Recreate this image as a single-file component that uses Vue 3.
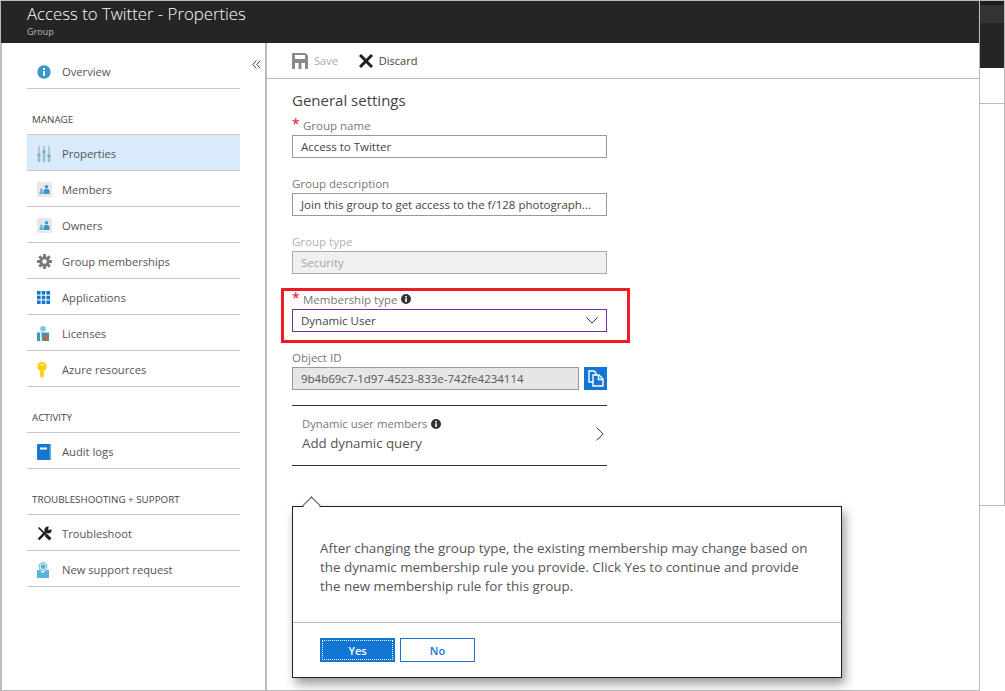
<template>
  <div class="page">
    <div class="blade">
      <header class="blade-head">
        <div class="title">Access to Twitter - Properties</div>
        <div class="subtitle">Group</div>
      </header>
      <div class="blade-body">
        <aside class="sidebar">
          <div class="collapse">
            <svg width="9" height="9" viewBox="0 0 9 9" fill="none" stroke="#444" stroke-width="1">
              <path d="M4.2.6.8 4.5l3.4 3.9M8.2.6 4.8 4.5l3.4 3.9" />
            </svg>
          </div>
          <nav class="nav">
            <div class="nav-group first">
              <a class="nav-item">
                <span class="ico">
                  <svg width="14" height="14" viewBox="0 0 14 14">
                    <circle cx="7" cy="7" r="6.7" fill="#3999c6" />
                    <rect x="6" y="6" width="2" height="5" fill="#fff" />
                    <rect x="6" y="3" width="2" height="2" fill="#fff" />
                  </svg>
                </span>
                Overview
              </a>
            </div>
            <div class="nav-group">
              <div class="nav-label">MANAGE</div>
              <a class="nav-item active">
                <span class="ico">
                  <svg width="14" height="16" viewBox="0 0 14 16">
                    <g fill="#a9d3e6"><rect x="0.5" y="7" width="3" height="9" /><rect x="5.5" y="4" width="3" height="12" /><rect x="10.5" y="8" width="3" height="8" /></g>
                    <g fill="#8fa3ae"><rect x="1.5" y="0" width="1" height="16" /><rect x="6.5" y="0" width="1" height="16" /><rect x="11.5" y="0" width="1" height="16" /><rect x="0.5" y="8" width="3" height="2" /><rect x="5.5" y="5" width="3" height="2" /><rect x="10.5" y="9" width="3" height="2" /></g>
                  </svg>
                </span>
                Properties
              </a>
              <a class="nav-item" v-for="label in ['Members', 'Owners']" :key="label">
                <span class="ico">
                  <svg width="15" height="15" viewBox="0 0 15 15">
                    <rect width="15" height="15" fill="#e8e8e8" />
                    <circle cx="9.5" cy="4.8" r="1.8" fill="#3999c6" />
                    <path d="M6.5 12V8.2L8 7h3l1.5 1.2V12z" fill="#3999c6" />
                    <circle cx="4.3" cy="7.8" r="1.2" fill="#59b4d9" />
                    <path d="M2.5 12V10l1-1h1.6l1 1v2z" fill="#59b4d9" />
                  </svg>
                </span>
                {{ label }}
              </a>
              <a class="nav-item">
                <span class="ico">
                  <svg width="15" height="15" viewBox="0 0 15 15">
                    <g stroke="#7a7a7a" stroke-width="2.8"><path d="M7.5 0v15M0 7.5h15M2.2 2.2l10.6 10.6M12.8 2.2 2.2 12.8" /></g>
                    <circle cx="7.5" cy="7.5" r="5.2" fill="#7a7a7a" />
                    <circle cx="7.5" cy="7.5" r="2.2" fill="#fff" />
                  </svg>
                </span>
                Group memberships
              </a>
              <a class="nav-item">
                <span class="ico">
                  <svg width="13" height="13" viewBox="0 0 13 13" fill="#1376d3">
                    <rect width="3.6" height="3.6" /><rect x="4.7" width="3.6" height="3.6" /><rect x="9.4" width="3.6" height="3.6" />
                    <rect y="4.7" width="3.6" height="3.6" /><rect x="4.7" y="4.7" width="3.6" height="3.6" /><rect x="9.4" y="4.7" width="3.6" height="3.6" />
                    <rect y="9.4" width="3.6" height="3.6" /><rect x="4.7" y="9.4" width="3.6" height="3.6" /><rect x="9.4" y="9.4" width="3.6" height="3.6" />
                  </svg>
                </span>
                Applications
              </a>
              <a class="nav-item">
                <span class="ico">
                  <svg width="12" height="15" viewBox="0 0 12 15">
                    <circle cx="6" cy="2.8" r="2.8" fill="#7cc4e4" />
                    <path d="M0 15V6.5h12V15z" fill="#3999c6" />
                    <path d="M3 15V6.5h1.5L5 15z" fill="#dff0f8" />
                    <path d="M6.5 15v-5l1.8-2 1.8 2v5z" fill="#c4662a" />
                  </svg>
                </span>
                Licenses
              </a>
              <a class="nav-item">
                <span class="ico">
                  <svg width="10" height="16" viewBox="0 0 10 16">
                    <path d="M5 0a4.6 4.6 0 0 1 2 8.8V14l-2 2-2-1.5V8.8A4.6 4.6 0 0 1 5 0z" fill="#fcd116" />
                    <rect x="3.5" y="2" width="3" height="1.3" fill="#fff3b0" />
                  </svg>
                </span>
                Azure resources
              </a>
            </div>
            <div class="nav-group">
              <div class="nav-label">ACTIVITY</div>
              <a class="nav-item">
                <span class="ico">
                  <svg width="14" height="16" viewBox="0 0 14 16">
                    <rect width="14" height="16" rx="1" fill="#1376d3" />
                    <rect x="12.5" y="1" width="1.5" height="14" fill="#59b4d9" />
                    <rect x="3" y="3.5" width="7" height="2" fill="#fff" />
                  </svg>
                </span>
                Audit logs
              </a>
            </div>
            <div class="nav-group">
              <div class="nav-label">TROUBLESHOOTING + SUPPORT</div>
              <a class="nav-item">
                <span class="ico">
                  <svg width="15" height="15" viewBox="0 0 15 15">
                    <path d="M1.5 1.5 9 9" stroke="#222" stroke-width="1.7" />
                    <path d="M8.8 8.8l4.6 4.6" stroke="#222" stroke-width="3.2" />
                    <path d="M1.6 13.4 9.8 5.2" stroke="#222" stroke-width="2.6" />
                    <circle cx="11" cy="4" r="3.6" fill="#222" />
                    <path d="M11 4 15.6 3 12 -.6z" fill="#fff" />
                  </svg>
                </span>
                Troubleshoot
              </a>
              <a class="nav-item">
                <span class="ico">
                  <svg width="12" height="16" viewBox="0 0 12 16">
                    <path d="M0 8h3l3 3 3-3h3v8H0z" fill="#59b4d9" />
                    <circle cx="6" cy="4.5" r="2.5" fill="#59b4d9" />
                    <circle cx="6" cy="4.5" r="4" fill="none" stroke="#59b4d9" stroke-width="1" />
                  </svg>
                </span>
                New support request
              </a>
            </div>
          </nav>
        </aside>
        <main class="content">
          <div class="toolbar">
            <span class="tool disabled">
              <svg width="16" height="16" viewBox="0 0 16 16" fill="#8a8a8a">
                <path d="M0 0h13.5L16 2.5V16H0z" />
                <rect x="3" y="2" width="10" height="4" fill="#fff" />
                <rect x="3" y="10" width="3.5" height="6" fill="#fff" />
                <rect x="9.5" y="10" width="3.5" height="6" fill="#fff" />
              </svg>
              Save
            </span>
            <span class="tool">
              <svg width="14" height="14" viewBox="0 0 14 14" fill="none" stroke="#222" stroke-width="3">
                <path d="M1 1l12 12M13 1 1 13" />
              </svg>
              Discard
            </span>
          </div>
          <section class="form">
            <h2 class="heading">General settings</h2>
            <div class="fields">
              <div class="field">
                <label class="label req">Group name</label>
                <div class="input">Access to Twitter</div>
              </div>
              <div class="field">
                <label class="label">Group description</label>
                <div class="input">Join this group to get access to the f/128 photograph...</div>
              </div>
              <div class="field">
                <label class="label muted">Group type</label>
                <div class="input disabled">Security</div>
              </div>
              <div class="field highlighted">
                <label class="label req">
                  Membership type
                  <svg class="info" width="10" height="10" viewBox="0 0 10 10">
                    <circle cx="5" cy="5" r="5" fill="#333" />
                    <rect x="4.2" y="4.2" width="1.6" height="3.8" fill="#fff" />
                    <rect x="4.2" y="2" width="1.6" height="1.5" fill="#fff" />
                  </svg>
                </label>
                <div class="input select">
                  Dynamic User
                  <svg width="12" height="7" viewBox="0 0 12 7" fill="none" stroke="#333" stroke-width="1">
                    <path d="M.5.5 6 6l5.5-5.5" />
                  </svg>
                </div>
              </div>
              <div class="field">
                <label class="label">Object ID</label>
                <div class="id-row">
                  <div class="input readonly">9b4b69c7-1d97-4523-833e-742fe4234114</div>
                  <button class="copy">
                    <svg width="16" height="17" viewBox="0 0 16 17" fill="none" stroke="#fff" stroke-width="1.4">
                      <path d="M1 1h5l2 2v9H1z" />
                      <path d="M5 5h6l4 4v7H5z" fill="#1376d3" />
                      <path d="M10.5 5v4.5H15" />
                    </svg>
                  </button>
                </div>
              </div>
            </div>
            <div class="dyn">
              <div>
                <div class="dyn-label">
                  Dynamic user members
                  <svg class="info" width="10" height="10" viewBox="0 0 10 10">
                    <circle cx="5" cy="5" r="5" fill="#333" />
                    <rect x="4.2" y="4.2" width="1.6" height="3.8" fill="#fff" />
                    <rect x="4.2" y="2" width="1.6" height="1.5" fill="#fff" />
                  </svg>
                </div>
                <div class="dyn-value">Add dynamic query</div>
              </div>
              <svg width="8" height="14" viewBox="0 0 8 14" fill="none" stroke="#333" stroke-width="1">
                <path d="M.6.6 7.2 7 .6 13.4" />
              </svg>
            </div>
          </section>
          <div class="popup">
            <span class="arrow"></span>
            <p class="popup-text">
              After changing the group type, the existing membership may change based on
              the dynamic membership rule you provide. Click Yes to continue and provide
              the new membership rule for this group.
            </p>
            <div class="popup-foot">
              <button class="btn primary">Yes</button>
              <button class="btn">No</button>
            </div>
          </div>
        </main>
      </div>
    </div>
    <div class="next-blade">
      <div class="next-head"><span class="next-top"></span><span class="next-hover"></span></div>
      <div class="next-cmd"></div>
    </div>
  </div>
</template>

<script setup>
</script>

<style>
html, body {
  margin: 0;
  background: #fff;
}
</style>

<style scoped>
.page {
  width: 1005px;
  height: 691px;
  box-sizing: border-box;
  display: flex;
  align-items: flex-start;
  overflow: hidden;
  border-top: 1px solid #bbb;
  border-left: 1px solid #bbb;
  font-family: "Open Sans", "Noto Sans", sans-serif;
  color: #444;
  background: #fff;
}

.blade {
  width: 979px;
  height: 690px;
  box-sizing: border-box;
  border-right: 1px solid #bbb;
  border-bottom: 1px solid #bbb;
  display: flex;
  flex-direction: column;
}

.blade-head {
  height: 42px;
  flex-shrink: 0;
  background: #252525;
  color: #fff;
  padding-left: 26px;
  box-sizing: border-box;
}

.title {
  font-size: 16.75px;
  line-height: 24px;
  padding-top: 1px;
  font-weight: 300;
}

.subtitle {
  font-size: 9px;
  line-height: 10px;
  padding-top: 1px;
  color: #bbb;
}

.blade-body {
  flex: 1;
  display: flex;
  min-height: 0;
}

.sidebar {
  width: 266px;
  flex-shrink: 0;
  box-sizing: border-box;
  border-left: 1px solid #bbb;
  border-right: 2px solid #bbb;
  padding-left: 25px;
  position: relative;
}

.collapse {
  position: absolute;
  top: 17px;
  left: 250px;
  line-height: 0;
}

.nav {
  width: 213px;
}

.nav-group.first {
  padding-top: 10px;
}

.nav-label {
  height: 46px;
  padding: 25px 0 0 5px;
  box-sizing: border-box;
  font-size: 9.8px;
  color: #444;
  line-height: 12px;
  border-bottom: 1px solid #c8c8c8;
  white-space: nowrap;
}

.nav-item {
  display: flex;
  align-items: center;
  height: 36px;
  box-sizing: border-box;
  padding-top: 2px;
  font-size: 11.2px;
  color: #555;
  border-bottom: 1px solid #c8c8c8;
}

.nav-item.active {
  background: #d9eafa;
}

.ico {
  width: 35px;
  padding-left: 10px;
  box-sizing: border-box;
  display: flex;
  align-items: center;
}

.content {
  flex: 1;
  display: flex;
  flex-direction: column;
  position: relative;
}

.toolbar {
  height: 36px;
  flex-shrink: 0;
  border-bottom: 1px solid #bbb;
  box-sizing: border-box;
  padding-left: 25px;
  display: flex;
  align-items: center;
  gap: 21px;
  font-size: 11px;
}

.tool {
  display: flex;
  align-items: center;
  gap: 6px;
  color: #444;
}

.tool.disabled {
  color: #aaa;
}

.form {
  padding: 11px 0 0 25px;
  width: 315px;
}

.heading {
  margin: 0 0 8px;
  font-size: 15px;
  font-weight: 400;
  line-height: 20px;
  color: #444;
}

.fields {
  display: flex;
  flex-direction: column;
  gap: 18px;
}

.label {
  display: block;
  font-size: 11.5px;
  line-height: 16px;
  color: #777;
  margin-bottom: 1px;
  position: relative;
}

.label.req {
  padding-left: 11px;
}

.label.req::before {
  content: "*";
  position: absolute;
  left: 0;
  top: -2px;
  color: #e00b1c;
  font-size: 14px;
}

.label.muted {
  color: #b0b0b0;
}

.input {
  height: 23px;
  box-sizing: border-box;
  border: 1px solid #999;
  padding: 0 8px;
  font-size: 11.5px;
  line-height: 21px;
  color: #444;
  background: #fff;
  white-space: nowrap;
  overflow: hidden;
}

.input.disabled {
  background: #f0f0f0;
  color: #a5a5a5;
  border-color: #aaa;
}

.input.readonly {
  background: #e6e6e6;
  color: #555;
  flex: 1;
}

.input.select {
  border-color: #7a2b9e;
  display: flex;
  justify-content: space-between;
  align-items: center;
}

.info {
  margin-left: 1px;
}

.highlighted {
  position: relative;
}

.highlighted::after {
  content: "";
  position: absolute;
  top: -4px;
  left: -11px;
  width: 349px;
  height: 55px;
  border: 3px solid #ed1c24;
  box-sizing: border-box;
  pointer-events: none;
}

.id-row {
  display: flex;
  gap: 5px;
}

.copy {
  width: 23px;
  height: 23px;
  padding: 0;
  border: none;
  background: #1376d3;
  display: flex;
  align-items: center;
  justify-content: center;
}

.dyn {
  height: 61px;
  border-top: 1px solid #333;
  border-bottom: 1px solid #333;
  box-sizing: border-box;
  margin-top: 15px;
  padding: 10px 3px 0 10px;
  display: flex;
  justify-content: space-between;
  align-items: flex-start;
}

.dyn > svg {
  margin-top: 11px;
}

.dyn-label {
  font-size: 11.3px;
  line-height: 16px;
  color: #777;
  margin-bottom: 1px;
}

.dyn-label .info {
  vertical-align: -1px;
}

.dyn-value {
  font-size: 13.3px;
  line-height: 20px;
  color: #555;
}

.popup {
  position: absolute;
  left: 25px;
  top: 463px;
  width: 550px;
  height: 172px;
  box-sizing: border-box;
  background: #fff;
  border: 1px solid #222;
  box-shadow: 3px 6px 10px rgba(0, 0, 0, 0.4);
  z-index: 2;
}

.arrow {
  position: absolute;
  top: -9px;
  left: 11px;
  width: 14px;
  height: 14px;
  background: #fff;
  border-top: 1px solid #222;
  border-left: 1px solid #222;
  transform: rotate(45deg) scale(0.85);
}

.popup-text {
  margin: 0;
  height: 116px;
  box-sizing: border-box;
  padding: 32px 30px 0 27px;
  font-size: 13.4px;
  line-height: 19px;
  color: #555;
  border-bottom: 1px solid #bbb;
}

.popup-foot {
  padding-top: 15px;
  padding-left: 27px;
  display: flex;
  gap: 5px;
}

.btn {
  width: 75px;
  height: 24px;
  padding: 0;
  box-sizing: border-box;
  border: 1px solid #1376d3;
  background: #fff;
  color: #1376d3;
  font-family: inherit;
  font-size: 11px;
  font-weight: 600;
}

.btn.primary {
  background: #1376d3;
  color: #fff;
  outline: 1px dotted #fff;
  outline-offset: -3px;
}

.next-blade {
  width: 25px;
  height: 505px;
  box-sizing: border-box;
  border-right: 1px solid #bbb;
  border-bottom: 1px solid #bbb;
}

.next-head {
  height: 67px;
  background: #252525;
}

.next-top {
  display: block;
  height: 4px;
  background: #1c1c1c;
}

.next-hover {
  display: block;
  height: 18px;
  background: #333;
}

.next-cmd {
  height: 35px;
  border-bottom: 1px solid #bbb;
}
</style>
